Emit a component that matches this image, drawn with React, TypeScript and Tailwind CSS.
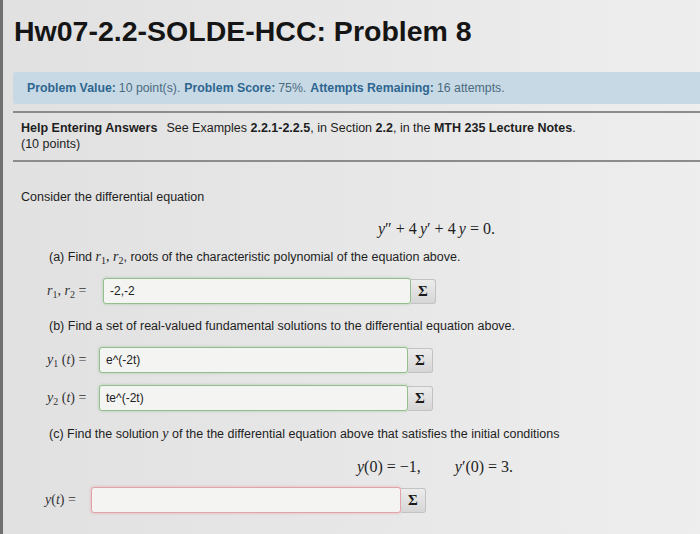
import React from 'react';

const serif = { fontFamily: '"Liberation Serif", "DejaVu Serif", serif' };

function Sigma() {
  return (
    <div className="flex h-[25px] w-[25px] items-center justify-center self-center rounded-r-[3px] border border-l-0 border-[#c2c2c2] bg-gradient-to-b from-[#ececec] to-[#d6d6d6] text-[15px] font-bold text-[#1a1a1a]" style={serif}>
      Σ
    </div>
  );
}

function AnswerBox({ value, width, error }: { value: string; width: string; error?: boolean }) {
  return (
    <div className="flex">
      <div
        className={
          'flex h-[26px] items-center rounded-[3px] border-[1.5px] bg-[#f4f4f2] pl-[6px] text-[12px] text-[#222] ' +
          width +
          (error
            ? ' border-[#e3a3ab] shadow-[0_0_3px_rgba(220,120,130,0.5)]'
            : ' border-[#93bf8e] shadow-[0_0_3px_rgba(120,180,110,0.5)]')
        }
      >
        {value}
      </div>
      <Sigma />
    </div>
  );
}

export default function App() {
  return (
    <div
      className="h-[534px] w-[700px] overflow-hidden border-l-[3px] border-[#707070] bg-gradient-to-r from-[#e1e1e1] via-[#e7e7e7] to-[#eeeeee] text-[#1e1e1e]"
      style={{ fontFamily: '"Liberation Sans", Arial, sans-serif' }}
    >
      {/* Title */}
      <h1 className="ml-[11px] mt-[16px] h-[31px] text-[28.5px] font-bold leading-[31px] text-[#151515]">
        Hw07-2.2-SOLDE-HCC: Problem 8
      </h1>

      {/* Score bar */}
      <div className="ml-[10px] mt-[25px] flex h-[32px] items-center rounded-l-[3px] bg-[#c7d9e5] pl-[14px] text-[12.3px] text-[#4b6b80]">
        <span className="font-bold text-[#2e6690]">Problem Value:</span>
        <span className="ml-[3px]">10 point(s).</span>
        <span className="ml-[4px] font-bold text-[#2e6690]">Problem Score:</span>
        <span className="ml-[3px]">75%.</span>
        <span className="ml-[4px] font-bold text-[#2e6690]">Attempts Remaining:</span>
        <span className="ml-[3px]">16 attempts.</span>
      </div>

      <div className="ml-[10px] mt-[7px] h-[2px] bg-[#8c8c8c]" />

      {/* Help */}
      <div className="mt-[7px] pl-[18px] text-[12.5px] leading-[16px]">
        <div>
          <span className="font-bold">Help Entering Answers</span>
          <span className="ml-[9px]">See Examples </span>
          <span className="font-bold">2.2.1-2.2.5</span>, in Section <span className="font-bold">2.2</span>, in the{' '}
          <span className="font-bold">MTH 235 Lecture Notes</span>.
        </div>
        <div>(10 points)</div>
      </div>

      <div className="ml-[10px] mt-[8px] h-[2px] bg-[#8c8c8c]" />

      {/* Problem */}
      <div className="pl-[18px] text-[12.5px] leading-[16px]">
        <div className="mt-[27px]">Consider the differential equation</div>

        <div className="ml-[357px] mt-[14px] text-[16px] leading-[20px]" style={serif}>
          <i>y</i>″ + 4{'\u2009'}<i>y</i>′ + 4{'\u2009'}<i>y</i> = 0.
        </div>

        <div className="ml-[28px] mt-[10px]">
          (a) Find <span className="text-[14px]" style={serif}><i>r</i><sub className="text-[10px]">1</sub>, <i>r</i><sub className="text-[10px]">2</sub></span>, roots of the characteristic polynomial of the equation above.
        </div>

        <div className="ml-[26px] mt-[13px] flex items-center">
          <div className="w-[56px] text-[14px] text-[#333]" style={serif}>
            <i>r</i><sub className="text-[10px]">1</sub>, <i>r</i><sub className="text-[10px]">2</sub> =
          </div>
          <AnswerBox value="-2,-2" width="w-[308px]" />
        </div>

        <div className="ml-[28px] mt-[14px]">
          (b) Find a set of real-valued fundamental solutions to the differential equation above.
        </div>

        <div className="ml-[26px] mt-[13px] flex items-center">
          <div className="w-[52px] text-[14px] text-[#333]" style={serif}>
            <i>y</i><sub className="text-[10px]">1</sub> (<i>t</i>) =
          </div>
          <AnswerBox value="e^(-2t)" width="w-[309px]" />
        </div>

        <div className="ml-[26px] mt-[12px] flex items-center">
          <div className="w-[52px] text-[14px] text-[#333]" style={serif}>
            <i>y</i><sub className="text-[10px]">2</sub> (<i>t</i>) =
          </div>
          <AnswerBox value="te^(-2t)" width="w-[309px]" />
        </div>

        <div className="ml-[28px] mt-[15px]">
          (c) Find the solution <i className="text-[14px]" style={serif}>y</i> of the the differential equation above that satisfies the initial conditions
        </div>

        <div className="ml-[336px] mt-[15px] flex text-[16px] leading-[20px]" style={serif}>
          <span>
            <i>y</i>(0) = −1,
          </span>
          <span className="ml-[34px]">
            <i>y</i>′(0) = 3.
          </span>
        </div>

        <div className="ml-[24px] mt-[10px] flex items-center">
          <div className="w-[46px] text-[14px] text-[#333]" style={serif}>
            <i>y</i>(<i>t</i>) =
          </div>
          <AnswerBox value="" width="w-[310px]" error />
        </div>
      </div>
    </div>
  );
}
